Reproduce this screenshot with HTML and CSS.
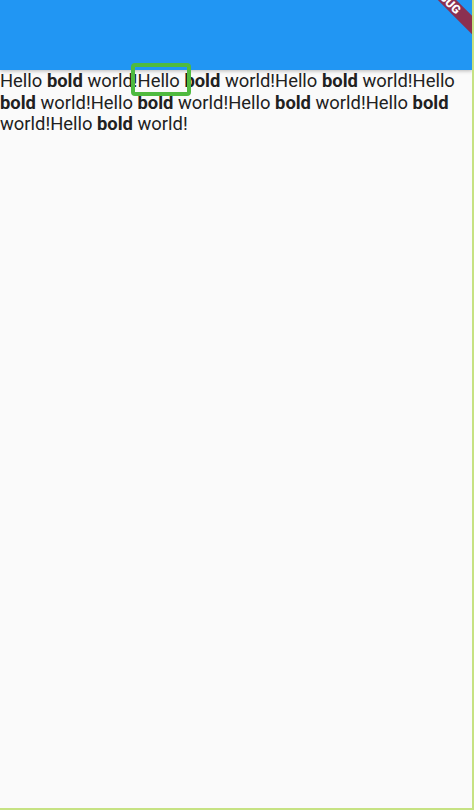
FILE: index.html
```html
<!DOCTYPE html>
<html>
<head>
<meta charset="utf-8">
<link rel="stylesheet" href="styles.css">
</head>
<body>
<div class="screen">
  <header class="appbar"></header>
  <main class="content">
    <p class="rich">Hello <b>bold</b> world!<span class="hl">Hello </span><b>bold</b> world!Hello <b>bold</b> world!Hello <b>bold</b> world!Hello <b>bold</b> world!Hello <b>bold</b> world!Hello <b>bold</b> world!Hello <b>bold</b> world!</p>
  </main>
  <svg class="banner" width="60" height="50" viewBox="0 0 60 50">
    <g transform="translate(46 11) rotate(45)">
      <rect x="-80" y="-6.5" width="160" height="13" fill="#8b3050"/>
      <text x="1" y="4.2" text-anchor="end" class="banner-text">DEBUG</text>
    </g>
  </svg>
</div>
</body>
</html>
```
FILE: styles.css
```css
html, body {
  margin: 0;
  padding: 0;
  background: #fafafa;
}
.screen {
  position: relative;
  width: 474px;
  height: 810px;
  box-sizing: border-box;
  border-right: 2px solid #c6e283;
  border-bottom: 2px solid #c6e283;
  background: #fafafa;
  overflow: hidden;
  display: flex;
  flex-direction: column;
}
.appbar {
  position: relative;
  z-index: 1;
  height: 70px;
  flex: none;
  background: #2196f3;
  box-shadow: 0 1px 3px rgba(0, 0, 0, 0.18), 0 2px 4px rgba(0, 0, 0, 0.08);
}
.content {
  flex: 1;
}
.rich {
  margin: 0;
  font-family: Roboto, "Liberation Sans", sans-serif;
  font-size: 18.4px;
  line-height: 21.5px;
  color: #212121;
}
.rich b {
  font-weight: 700;
}
.hl {
  position: relative;
}
.hl::after {
  content: "";
  position: absolute;
  left: -7px;
  right: -7px;
  top: -7px;
  bottom: -5px;
  border: 4px solid #4fba3f;
  border-radius: 4px;
  z-index: 2;
}
.banner {
  position: absolute;
  top: 0;
  right: 0;
  z-index: 3;
}
.banner-text {
  font-family: Roboto, "Liberation Sans", sans-serif;
  font-size: 12px;
  font-weight: 900;
  fill: #ffffff;
}
```
